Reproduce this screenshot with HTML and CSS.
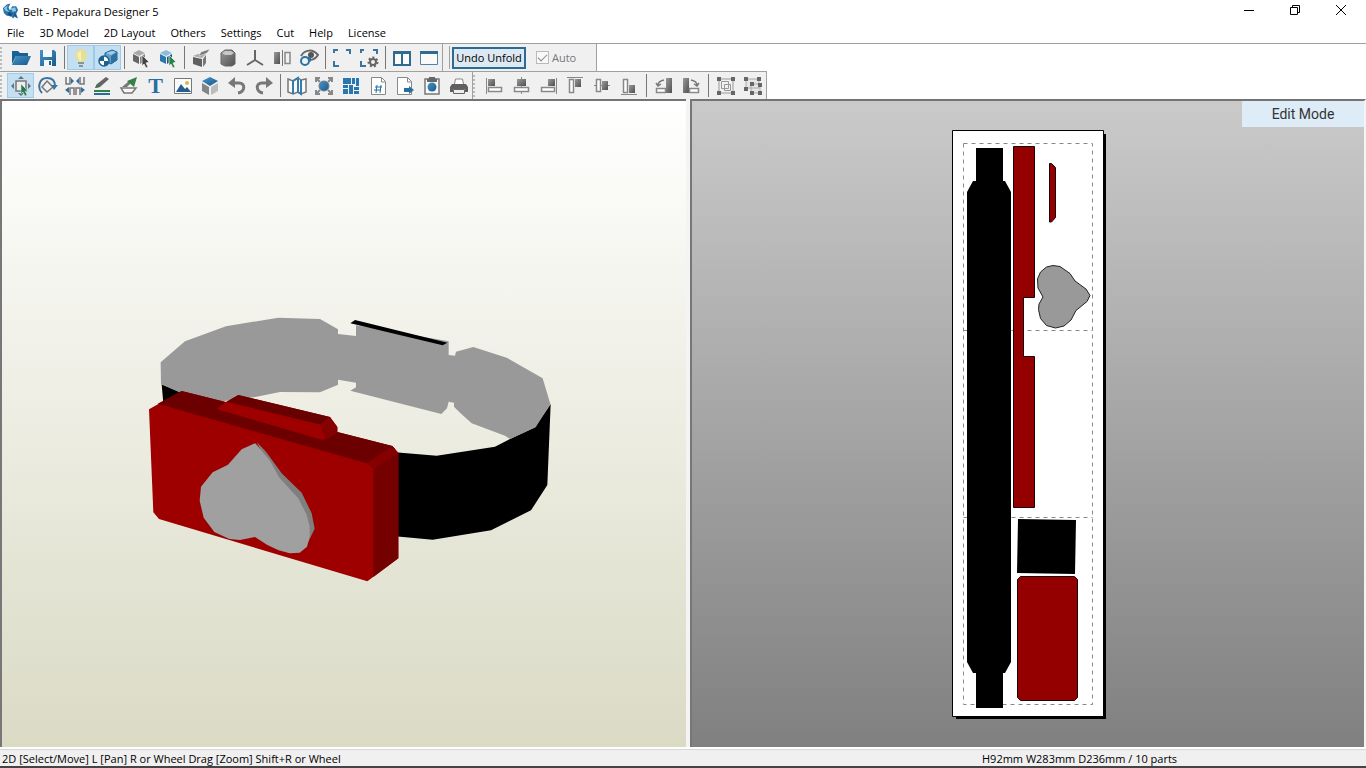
FILE: index.html
```html
<!DOCTYPE html>
<html lang="en">
<head>
    <meta charset="UTF-8">
    <meta name="viewport" content="width=device-width, initial-scale=1.0">
    <title>Belt - Pepakura Designer 5</title>
    <link rel="stylesheet" href="styles.css">
</head>
<body>
    <!-- Shared icon gradients -->
    <svg class="defs" aria-hidden="true">
        <defs>
            <linearGradient id="blue" x1="0" y1="0" x2="1" y2="1"><stop offset="0" stop-color="#4a94c8"/><stop offset="1" stop-color="#175a8c"/></linearGradient>
            <linearGradient id="gray" x1="0" y1="0" x2="1" y2="1"><stop offset="0" stop-color="#9a9a9a"/><stop offset="1" stop-color="#505050"/></linearGradient>
        </defs>
    </svg>

    <header class="title-bar">
        <svg class="logo" viewBox="0 0 18 18"><path fill="#2476a8" d="M1 6 5 2 9 1 7 5 8 8 11 4 15 4 17 8 15 12 17 17 13 15 12 17 9 14 5 14 2 11z"/><path fill="#8cc6e4" d="M2 6 6 3 5 7 8 10 4 9zM10 6l4-1 1 4-4 1z"/><path fill="#174e7c" d="m7 10 4 2-2 3-3-2zM13 10l3 6-3-2z"/><path fill="#fff" d="m8 7 2-1v2z"/></svg>
        <h1>Belt - Pepakura Designer 5</h1>
        <div class="window-buttons">
            <button aria-label="Minimize"><svg viewBox="0 0 12 12"><path d="M1 6.5h10"/></svg></button>
            <button aria-label="Restore"><svg viewBox="0 0 12 12"><path d="M1.5 3.500h7v7h-7zM3.500 3.500v-2h7v7h-2"/></svg></button>
            <button aria-label="Close"><svg viewBox="0 0 12 12"><path d="m1 1 10 10M11 1 1 11"/></svg></button>
        </div>
    </header>

    <nav class="menu">
        <button>File</button>
        <button>3D Model</button>
        <button>2D Layout</button>
        <button>Others</button>
        <button>Settings</button>
        <button>Cut</button>
        <button>Help</button>
        <button>License</button>
    </nav>

    <!-- Main toolbar -->
    <div class="tool-row main-row">
        <div class="toolbar">
            <span class="grip"></span>
            <button class="tool" aria-label="Open"><svg viewBox="0 0 20 20"><path fill="#1c5f93" d="M1 3h6l2 2h8v3H5L1 16z"/><path fill="url(#blue)" d="M5 8h15l-4 9H1z"/></svg></button>
            <button class="tool" aria-label="Save"><svg viewBox="0 0 20 20"><path fill="url(#blue)" d="M2 2h14l2 2v14H2z"/><path fill="#f4f8fa" d="M5 2h9v7H5zM6 12h8v6H6z"/><path fill="#245f88" d="M11 13h2v4h-2z"/></svg></button>
            <span class="sep"></span>
            <button class="tool on" aria-label="Light"><svg viewBox="0 0 20 20"><path fill="#e7df93" d="M10 1a6 6 0 0 0-6 6c0 3 3 4 3 7h6c0-3 3-4 3-7a6 6 0 0 0-6-6z"/><path fill="#f5efb9" d="M10 3a4 4 0 0 0-3 6l2 4h1z"/><path fill="#85959c" d="M7 14h6v2H7zM8 17h4v2H8z"/></svg></button>
            <button class="tool on" aria-label="Texture"><svg viewBox="0 0 20 20"><path fill="#5d9fc9" stroke="#20608f" d="m7 5 7-3 5 2v8l-6 4-6-3z"/><path fill="#2b71a3" d="m13 8 6-4v8l-6 4z"/><path fill="#a6cbe0" d="m8 5 6-2 4 1-5 3z"/><circle cx="6" cy="13" r="5" fill="#fff" stroke="#20608f" stroke-width="1.5"/><path fill="#20608f" d="M6 13V8a5 5 0 0 0-5 5zM6 13v5a5 5 0 0 0 5-5z"/></svg></button>
            <span class="sep"></span>
            <button class="tool" aria-label="Select part"><svg viewBox="0 0 20 20"><path fill="#aaa" d="m2 5 6-3 6 3-6 3z"/><path fill="#666" d="m2 6 6 3v7l-6-3z"/><path fill="#858585" d="m9 9 5-3v7l-5 3z"/><path fill="#444" stroke="#f0f0f0" stroke-width=".7" d="m11 7 7 7-3 1 2 4-2 1-2-4-2 2z"/></svg></button>
            <button class="tool" aria-label="Select face"><svg viewBox="0 0 20 20"><path fill="#8dbcda" d="m2 5 6-3 6 3-6 3z"/><path fill="#2c77ab" d="m2 6 6 3v7l-6-3z"/><path fill="#185c8e" d="m9 9 5-3v7l-5 3z"/><path fill="#268247" stroke="#f0f0f0" stroke-width=".7" d="m11 7 7 7-3 1 2 4-2 1-2-4-2 2z"/></svg></button>
            <span class="sep"></span>
            <button class="tool" aria-label="Edit open edge"><svg viewBox="0 0 20 20"><path fill="#aaa" d="m2 8 5-2h8l-4 4z"/><path fill="#606060" d="m2 9 9 2v8l-9-3z"/><path fill="#777" d="m12 11 3-4v8l-3 4z"/><path fill="#777" stroke="#f0f0f0" stroke-width=".5" d="m8 8 2-4 9-3-3 4-5 2z"/></svg></button>
            <button class="tool" aria-label="Join faces"><svg viewBox="0 0 20 20"><path fill="url(#gray)" stroke="#666" d="m3 5 4-3h7l3 3v11l-3 2H7l-4-2z"/><path fill="#c7c7c7" d="m4 5 3-2h6l3 2-3 2H7z"/></svg></button>
            <button class="tool" aria-label="Axes"><svg viewBox="0 0 20 20"><path fill="none" stroke="#666" stroke-width="2" d="M10 2v10L2 17M10 12l8 5"/></svg></button>
            <button class="tool" aria-label="Mirror"><svg viewBox="0 0 20 20"><path fill="url(#gray)" d="M2 4h6v12H2z"/><path stroke="#777" d="M10.500 2v16"/><path fill="none" stroke="#888" stroke-width="1.500" d="M13 4.500h5v11h-5z"/></svg></button>
            <button class="tool" aria-label="Reset view"><svg viewBox="0 0 20 20"><path fill="#eee" stroke="#666" stroke-width="2" d="M2 8c4-7 12-7 17-1-4 6-10 6-14 3"/><circle cx="12" cy="7" r="3" fill="#555"/><circle cx="6" cy="13" r="4" fill="#f0f0f0" stroke="#2873a6" stroke-width="2"/><path fill="#2873a6" d="M7 9h5v5z"/></svg></button>
            <span class="sep"></span>
            <button class="tool" aria-label="Fit"><svg viewBox="0 0 20 20"><path fill="none" stroke="#39769f" stroke-width="2" d="M6 2H2v3M14 2h4v4M2 13v5h5"/></svg></button>
            <button class="tool" aria-label="Fit settings"><svg viewBox="0 0 20 20"><path fill="none" stroke="#39769f" stroke-width="2" d="M5 2H2v3M14 2h4v4M2 13v5h5"/><circle cx="14" cy="14" r="3" fill="none" stroke="#666" stroke-width="2"/><circle cx="14" cy="14" r="4.500" fill="none" stroke="#666" stroke-width="2" stroke-dasharray="2 2"/></svg></button>
            <span class="sep"></span>
            <button class="tool" aria-label="Two panes"><svg viewBox="0 0 20 20"><path fill="#fafafa" stroke="#32698f" stroke-width="2" d="M2 4h16v13H2z"/><path fill="#32698f" d="M1 3h18v3H1zM9 3h2v14H9z"/></svg></button>
            <button class="tool" aria-label="One pane"><svg viewBox="0 0 20 20"><path fill="#fafafa" stroke="#52839f" d="M1.500 3.500h17v13h-17z"/><path fill="#32698f" d="M1 3h18v3H1z"/></svg></button>
        </div>
        <div class="toolbar unfold-bar">
            <button class="unfold">Undo Unfold</button>
            <label class="auto"><input type="checkbox" checked disabled>Auto</label>
        </div>
    </div>

    <!-- Layout and alignment toolbars -->
    <div class="tool-row">
        <div class="toolbar">
            <span class="grip"></span>
            <button class="tool on" aria-label="Select and move"><svg viewBox="0 0 20 20"><path fill="#5f7480" d="m10 0 3 3H7zM10 20l-3-3h6zM0 10l3-3v6zM20 10l-3 3V7z"/><path fill="#eee" stroke="#777" stroke-width="1.500" d="M5 5h10v10H5z"/><path fill="#237b43" stroke="#d9e9f2" stroke-width=".5" d="m10 8 7 7-3 0 2 4-2 1-2-4-2 2z"/></svg></button>
            <button class="tool" aria-label="Rotate"><svg viewBox="0 0 20 20"><path fill="none" stroke="#777" stroke-width="1.500" d="m9 5 6 6-6 5-5-5z"/><path fill="none" stroke="#3576a2" stroke-width="2" d="M4 17C-1 12 1 2 9 2c5 0 8 3 8 8"/><path fill="#3576a2" d="M13 9h7l-4 5z"/></svg></button>
            <button class="tool" aria-label="Join and disjoin"><svg viewBox="0 0 20 20"><path fill="none" stroke="#777" stroke-width="1.500" d="M1 1v7h4V1M19 1v7h-4V1M5 19v-7h4v7M15 19v-7h-4v7"/><path fill="#2b6f9e" d="m9 5-3-3v6zM11 5l3-3v6zM0 14l4-3v6zM20 14l-4-3v6z"/></svg></button>
            <button class="tool" aria-label="Edge color"><svg viewBox="0 0 20 20"><path fill="#656565" d="m3 12 2-4L14 1l3 2-9 8z"/><path fill="#397651" d="m3 12 2-4 3 3z"/><path fill="#348144" d="M2 14h16v2H2z"/><path fill="#286e9c" d="M2 17h16v2H2z"/></svg></button>
            <button class="tool" aria-label="Edit flaps"><svg viewBox="0 0 20 20"><path fill="#f8f8f8" stroke="#777" stroke-width="1.500" d="M2 12h15l-4 5H5z"/><path fill="#777" d="m3 11 7-6 2 2-4 4z"/><path fill="#348144" d="m8 5 10-4-3 10z"/></svg></button>
            <button class="tool letter" aria-label="Text">T</button>
            <button class="tool" aria-label="Image"><svg viewBox="0 0 20 20"><path fill="#f9fbfc" stroke="#777" d="M1.500 2.500h17v15h-17z"/><circle cx="14" cy="7" r="2" fill="#d7b942"/><path fill="#235e91" d="m3 16 5-8 4 5 2-2 4 5z"/></svg></button>
            <button class="tool" aria-label="3D cube"><svg viewBox="0 0 20 20"><path fill="url(#blue)" d="m2 5 8-4 8 4-8 5z"/><path fill="#858585" d="m2 7 7 4v8l-7-4z"/><path fill="#bcbcbc" d="m11 11 7-4v8l-7 4z"/></svg></button>
            <button class="tool" aria-label="Undo"><svg viewBox="0 0 20 20"><path fill="none" stroke="#777" stroke-width="3" d="M4 7h8c7 0 6 9-1 10"/><path fill="#777" d="m1 7 7-6v11z"/></svg></button>
            <button class="tool" aria-label="Redo"><svg viewBox="0 0 20 20"><path fill="none" stroke="#777" stroke-width="3" d="M16 7H8c-7 0-6 9 1 10"/><path fill="#777" d="m19 7-7-6v11z"/></svg></button>
            <span class="sep"></span>
            <button class="tool" aria-label="Unfold"><svg viewBox="0 0 20 20"><path fill="#fafafa" stroke="#777" stroke-width="1.500" d="m1 3 5 2 5-3 3 2 5-1v13l-5 2-3-2-5 2-5-2z"/><path fill="none" stroke="#367ba9" stroke-width="2" d="M6 18V5l5-3v14l3 2V4"/></svg></button>
            <button class="tool" aria-label="Fit layout"><svg viewBox="0 0 20 20"><path fill="none" stroke="#888" stroke-width="2" d="M6 2H2v4M14 2h4v4M2 14v4h4M18 14v4h-4M3 3l3 3M17 3l-3 3M3 17l3-3M17 17l-3-3"/><circle cx="10" cy="10" r="5" fill="url(#blue)" stroke="#687d8c"/></svg></button>
            <button class="tool" aria-label="Arrange parts"><svg viewBox="0 0 20 20"><path fill="#2877ae" d="M2 2h8v6H2zM2 9h5v3H2zM2 13h5v5H2zM8 9h4v9H8zM11 2h3v6h-3zM15 2h3v8h-3zM13 11h5v3h-5zM13 15h5v3h-5z"/></svg></button>
            <button class="tool" aria-label="Page number"><svg viewBox="0 0 20 20"><path fill="#fff" stroke="#888" d="M3.500 1.500h10l4 4v13h-14z"/><path fill="none" stroke="#888" d="M13.500 2v4h4"/><path fill="none" stroke="#286f9f" d="m9 9-1 8M13 9l-1 8M7 11h7M6 14h7"/></svg></button>
            <button class="tool" aria-label="Export"><svg viewBox="0 0 20 20"><path fill="#fff" stroke="#888" d="M2.500 1.500h10l4 4v13h-14z"/><path fill="none" stroke="#888" d="M12.500 2v4h4"/><path fill="#286f9f" d="M9 12h5v-2l5 4-5 4v-2H9z"/></svg></button>
            <button class="tool" aria-label="Copy"><svg viewBox="0 0 20 20"><path fill="#fafafa" stroke="#777" stroke-width="1.500" d="M3 3h14v15H3z"/><path fill="#666" d="M7 3V1h6v2h2v3H5V3z"/><circle cx="10" cy="11" r="4.500" fill="url(#blue)"/></svg></button>
            <button class="tool" aria-label="Print"><svg viewBox="0 0 20 20"><path fill="#fff" stroke="#888" d="m5.500 8 1-5h7l1 5"/><path fill="#606060" d="M3 8h14l2 3v5h-3v-3H4v3H1v-5z"/><path fill="#eee" stroke="#666" d="M4.500 13.500h11v4h-11z"/></svg></button>
        </div>
        <div class="toolbar align-bar">
            <span class="grip"></span>
            <button class="tool" aria-label="Align left"><svg viewBox="0 0 20 20"><path stroke="#888" d="M2.500 2v16"/><path fill="url(#gray)" d="M4 3h7v7H4z"/><path fill="#fff" stroke="#888" stroke-width="1.500" d="M4.500 11.500h13v4h-13z"/></svg></button>
            <button class="tool" aria-label="Align center"><svg viewBox="0 0 20 20"><path stroke="#888" d="M10.500 1v17"/><path fill="url(#gray)" d="M6 3h9v7H6z"/><path fill="#fff" stroke="#888" stroke-width="1.500" d="M3.500 11.500h14v4h-14z"/></svg></button>
            <button class="tool" aria-label="Align right"><svg viewBox="0 0 20 20"><path stroke="#888" d="M18.500 2v16"/><path fill="url(#gray)" d="M10 3h7v7h-7z"/><path fill="#fff" stroke="#888" stroke-width="1.500" d="M3.500 11.500h13v4h-13z"/></svg></button>
            <button class="tool" aria-label="Align top"><svg viewBox="0 0 20 20"><path stroke="#888" d="M2 1.500h16"/><path fill="#fff" stroke="#888" stroke-width="1.500" d="M4.500 3.500h4v13h-4z"/><path fill="url(#gray)" d="M10 3h6v8h-6z"/></svg></button>
            <button class="tool" aria-label="Align middle"><svg viewBox="0 0 20 20"><path stroke="#888" d="M2 9.500h16"/><path fill="#fff" stroke="#888" stroke-width="1.500" d="M4.500 3.500h4v12h-4z"/><path fill="url(#gray)" d="M10 5h6v9h-6z"/></svg></button>
            <button class="tool" aria-label="Align bottom"><svg viewBox="0 0 20 20"><path stroke="#888" d="M2 18.500h16"/><path fill="#fff" stroke="#888" stroke-width="1.500" d="M4.500 3.500h4v13h-4z"/><path fill="url(#gray)" d="M10 9h6v8h-6z"/></svg></button>
            <span class="sep"></span>
            <button class="tool" aria-label="Turn left"><svg viewBox="0 0 20 20"><path fill="url(#gray)" d="M12 2h6v15h-6z"/><path fill="#fff" stroke="#888" stroke-width="1.500" d="M2.500 12.500h9v4h-9z"/><path fill="none" stroke="#777" stroke-width="1.500" d="M4 10c0-4 2-5 6-6M2 7l2 3 3-2"/></svg></button>
            <button class="tool" aria-label="Turn right"><svg viewBox="0 0 20 20"><path fill="url(#gray)" d="M2 2h6v15H2z"/><path fill="#fff" stroke="#888" stroke-width="1.500" d="M8.500 12.500h9v4h-9z"/><path fill="none" stroke="#777" stroke-width="1.500" d="M16 10c0-4-2-5-6-6M18 7l-2 3-3-2"/></svg></button>
            <span class="sep"></span>
            <button class="tool" aria-label="Group"><svg viewBox="0 0 20 20"><path fill="none" stroke="#999" d="M3 3h14v14H3zM5.500 5.500h7v7h-7zM8.500 8.500h6v6h-6z"/><path fill="#666" d="M1 1h4v4H1zM15 1h4v4h-4zM1 15h4v4H1zM15 15h4v4h-4z"/></svg></button>
            <button class="tool" aria-label="Ungroup"><svg viewBox="0 0 20 20"><path fill="#e5e5e5" stroke="#aaa" d="M3 3h13v9H3zM8 8h9v9H8z"/><path fill="#666" d="M1 1h4v4H1zM14 1h4v4h-4zM1 11h4v4H1zM7 6h4v4H7zM15 7h4v4h-4zM7 15h4v4H7zM15 15h4v4h-4z"/></svg></button>
        </div>
    </div>

    <main class="panes">
        <section class="pane pane-3d" aria-label="3D model">
            <svg viewBox="2 101 684 646">
                <svg x="140" y="300" width="420" height="290" viewBox="0 0 1260 870">
                    <!-- Belt -->
                    <path d="M65 253 130 280 70 310zM765 457 890 467 1065 440 1110 417 1185 382 1232 312 1222 555 1173 631 1053 691 878 719 765 709z"/>
                    <path fill="#999" d="M62 187 135 124 258 79 415 53 540 57 594 88V102L648 108V76L926 124V165L945 167 948 155 1000 141 1100 173 1208 235 1231 312 1187 382 1110 417 1095 407 995 370 960 338 942 320V308L926 305 921 325 904 342 631 272 648 262V248L594 239V254L540 277 420 276 340 292 200 310 130 282 63 253z"/>
                    <path d="M631 70 645 60 922 128 908 136z"/>
                    <!-- Buckle -->
                    <path fill="#9e0000" d="M27 328 125 273 257 306 295 285 570 351 592 381V396L757 438 775 460V775L682 844 57 657 40 637z"/>
                    <path fill="#6c0000" d="M53 311 125 273 257 306 232 328 545 418 592 396 757 438 765 446 680 490z"/>
                    <path fill="#850000" d="M680 490 757 438 775 458 700 508z"/>
                    <path fill="#750000" d="M700 508 775 458V775L700 831z"/>
                    <path fill="#690000" d="M260 306 295 285 570 351 540 374z"/>
                    <path fill="#850000" d="M540 374 570 351 592 381V397L556 420z"/>
                    <path fill="#9e0000" d="M232 326 262 306 540 374 556 418 545 419z"/>
                    <!-- Heart -->
                    <path fill="#7f7f7f" d="M350 426 378 455 425 520 485 578 515 640 524 686 500 735z"/>
                    <path fill="#a0a0a0" d="M345 430 305 448 264 494 218 517 183 560 179 602 191 653 223 696 268 717 300 720 345 711 382 735 416 751 449 760 479 758 501 740 509 710 509 680 500 644 474 594 417 532 390 482 350 434z"/>
                </svg>
            </svg>
        </section>

        <section class="pane pane-2d" aria-label="2D layout">
            <div class="mode">Edit Mode</div>
            <svg viewBox="692 101 672 646">
                <path d="M956 134h150v585H956z"/>
                <path fill="#fff" stroke="#000" d="M952.500 130.500h151v586h-151z"/>
                <path class="page-line" d="M963.500 143.500h129v561h-129zM963.500 330.500h129M963.500 517.500h129"/>
                <path d="M976 148h27v33h2l6 11v470l-6 11h-2v35h-27v-35h-3l-6-11V192l6-11h3z"/>
                <g fill="#940000" stroke="#1a0000">
                    <path d="M1013.500 146.500h21v151h-11v59h11v151h-21zM1049.500 163.500h2l4 4v50l-4 4.500h-2z"/>
                    <path d="m1020.500 576.500h54l3 3v118l-3 3h-54l-3-3v-118z"/>
                </g>
                <path fill="#999" stroke="#222" d="M1053 265.500 1060 266.500 1065 270 1070 273.500 1075 281 1086 289 1090 295.500 1087 301.500 1076 310.500 1071 320 1064 326 1055.500 328 1046.500 325.500 1040.500 318.500 1038.500 309.500 1039 304 1043 297 1038 288 1037.500 279 1040.500 272 1046.500 267z"/>
                <path d="m1018 519 58 1-1 54-58-1z"/>
            </svg>
        </section>
    </main>

    <footer class="status">
        <span>2D [Select/Move] L [Pan] R or Wheel Drag [Zoom] Shift+R or Wheel</span>
        <span>H92mm W283mm D236mm / 10 parts</span>
    </footer>
</body>
</html>
```

FILE: styles.css
```css
* {
    box-sizing: border-box;
}

body {
    margin: 0;
    height: 100vh;
    display: flex;
    flex-direction: column;
    overflow: hidden;
    background-color: #fff;
    color: #000;
    font-family: "Open Sans", "Noto Sans", sans-serif;
    font-size: 11px;
}

button {
    font: inherit;
    color: inherit;
    background: none;
    border: 0;
    padding: 0;
}

.defs {
    position: absolute;
    width: 0;
    height: 0;
}

.title-bar {
    display: flex;
    align-items: center;
    height: 22px;
    padding-left: 2px;
}

.logo {
    width: 17px;
    height: 18px;
    margin-right: 4px;
}

h1 {
    margin: 0;
    font-size: 11px;
    font-weight: 400;
}

.window-buttons {
    display: flex;
    margin-left: auto;
    padding-right: 2px;
}

.window-buttons button {
    width: 46px;
    height: 20px;
}

.window-buttons svg {
    width: 12px;
    height: 12px;
    fill: none;
    stroke: #000;
}

.menu {
    display: flex;
    gap: 15px;
    height: 21px;
    padding-left: 7px;
}

/* Toolbars */
.tool-row {
    display: flex;
    height: 28px;
}

.main-row {
    border-top: 1px solid #a0a0a0;
}

.toolbar {
    display: flex;
    align-items: center;
    background-color: #f0f0f0;
    border-top: 1px solid #a0a0a0;
    border-right: 1px solid #a0a0a0;
}

.main-row .toolbar {
    border-top: 0;
}

.grip {
    width: 7px;
    height: 22px;
    border-left: 2px dotted #bbb;
    border-right: 3px solid transparent;
    background-clip: padding-box;
}

.tool {
    display: flex;
    align-items: center;
    justify-content: center;
    width: 27px;
    height: 25px;
}

.tool svg {
    width: 20px;
    height: 20px;
}

.tool.on {
    background-color: #c4dff2;
    border: 1px solid #9fcbea;
}

.letter {
    color: #286f9f;
    font-family: "Liberation Serif", serif;
    font-size: 22px;
    font-weight: 700;
}

.sep {
    width: 6px;
    height: 23px;
    background: linear-gradient(#777, #777) center / 1px 100% no-repeat;
}

.align-bar .sep {
    width: 8px;
}

.unfold-bar {
    padding: 0 20px 0 4px;
}

.unfold-bar::before {
    content: "";
    width: 2px;
    height: 23px;
    margin-right: 2px;
    border-right: 1px solid #a0a0a0;
}

.unfold {
    width: 74px;
    height: 22px;
    border: 2px solid #2b6c96;
    background-color: #dce8f2;
}

.auto {
    display: flex;
    align-items: center;
    gap: 3px;
    margin-left: 10px;
    color: #777;
}

.auto input {
    appearance: none;
    width: 13px;
    height: 13px;
    margin: 0;
    border: 1px solid #bbb;
    background: #f8f8f8;
}

.auto input:checked::after {
    content: "";
    display: block;
    width: 8px;
    height: 4px;
    margin: 2px 1px;
    border-left: 1px solid #888;
    border-bottom: 1px solid #888;
    transform: rotate(-45deg);
}

/* Work area */
.panes {
    flex: 1;
    min-height: 0;
    display: grid;
    grid-template-columns: 686fr 676fr;
    gap: 4px;
    background-color: #f4f4f4;
    border-bottom: 2px solid #fff;
}

.pane {
    position: relative;
    min-width: 0;
    min-height: 0;
    border-top: 2px solid #747474;
    border-left: 2px solid #777;
}

.pane > svg {
    display: block;
    width: 100%;
    height: 100%;
}

.pane-3d {
    background: linear-gradient(#fff, #dadac5);
}

.pane-2d {
    border-right: 2px solid #f4f4f4;
    background: linear-gradient(#cacaca, #808080);
}

.mode {
    position: absolute;
    top: 0;
    right: 0;
    width: 122px;
    line-height: 26px;
    background-color: #ddecf6;
    color: #333;
    font-family: Roboto, sans-serif;
    font-size: 14px;
    text-align: center;
}

.page-line {
    fill: none;
    stroke: #888;
    stroke-dasharray: 4 4;
}

.status {
    display: grid;
    grid-template-columns: 980fr 384fr;
    height: 19px;
    padding-left: 2px;
    border-top: 1px solid #d8d8d8;
    border-bottom: 2px solid #444;
    background-color: #f0f0f0;
    line-height: 18px;
    white-space: nowrap;
}
```
